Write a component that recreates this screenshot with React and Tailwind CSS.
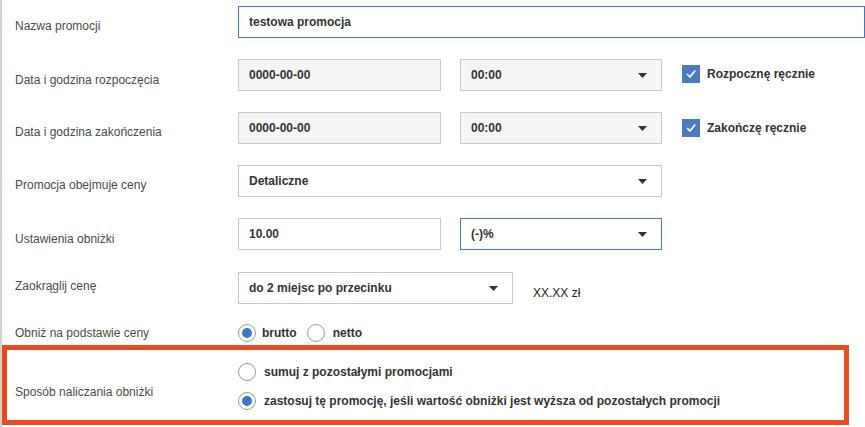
import React from "react";

const Caret = () => (
  <svg width="9" height="5" viewBox="0 0 9 5" className="shrink-0">
    <path d="M0 0 L9 0 L4.5 5 Z" fill="#333" />
  </svg>
);

const Check = () => (
  <div className="w-[18px] h-[18px] bg-[#4a7cbf] flex items-center justify-center shrink-0">
    <svg width="12" height="10" viewBox="0 0 12 10">
      <path d="M2.5 5.5 L5 8 L9.8 2" stroke="#fff" strokeWidth="1.7" fill="none" strokeLinecap="round" strokeLinejoin="round" />
    </svg>
  </div>
);

const Radio = ({ checked }) => (
  <div className="w-[18px] h-[18px] rounded-full border-[1.5px] border-[#9a9a9a] bg-white flex items-center justify-center shrink-0">
    {checked && <div className="w-[10px] h-[10px] rounded-full bg-[#3f78c2]" />}
  </div>
);

const Label = ({ children, pt }) => (
  <div className={`w-[236px] shrink-0 pl-[13px] text-[12px] leading-[16px] text-[#4a4a4a] ${pt}`}>{children}</div>
);

const Box = ({ children, className }) => (
  <div className={`h-[32px] flex items-center justify-between px-[10px] text-[12px] font-bold text-[#333] border ${className}`}>
    {children}
  </div>
);

export default function App() {
  return (
    <div
      className="w-[865px] h-[427px] overflow-hidden bg-white border-l-2 border-[#d2d2d2] flex flex-col pt-[6px]"
      style={{ fontFamily: '"Liberation Sans", Arial, sans-serif' }}
    >
      <div className="flex h-[32px]">
        <Label pt="pt-[12px]">Nazwa promocji</Label>
        <Box className="w-[660px] border-[#3d7bc6] bg-white">testowa promocja</Box>
      </div>

      <div className="flex h-[32px] mt-[21px]">
        <Label pt="pt-[13px]">Data i godzina rozpoczęcia</Label>
        <Box className="w-[203px] border-[#c8c8c8] bg-[#f5f5f5]">0000-00-00</Box>
        <Box className="w-[202px] ml-[19px] border-[#c8c8c8] bg-[#f5f5f5] pr-[14px]">
          <span>00:00</span>
          <Caret />
        </Box>
        <div className="flex items-center ml-[20px] gap-[7px] text-[12px] font-bold text-[#333] -mt-[2px]">
          <Check />
          <span>Rozpocznę ręcznie</span>
        </div>
      </div>

      <div className="flex h-[32px] mt-[21px]">
        <Label pt="pt-[12px]">Data i godzina zakończenia</Label>
        <Box className="w-[203px] border-[#c8c8c8] bg-[#f5f5f5]">0000-00-00</Box>
        <Box className="w-[202px] ml-[19px] border-[#c8c8c8] bg-[#f5f5f5] pr-[14px]">
          <span>00:00</span>
          <Caret />
        </Box>
        <div className="flex items-center ml-[20px] gap-[7px] text-[12px] font-bold text-[#333] -mt-[1px]">
          <Check />
          <span>Zakończę ręcznie</span>
        </div>
      </div>

      <div className="flex h-[32px] mt-[21px]">
        <Label pt="pt-[12px]">Promocja obejmuje ceny</Label>
        <Box className="w-[424px] border-[#c8c8c8] bg-white pr-[14px]">
          <span>Detaliczne</span>
          <Caret />
        </Box>
      </div>

      <div className="flex h-[32px] mt-[21px]">
        <Label pt="pt-[13px]">Ustawienia obniżki</Label>
        <Box className="w-[203px] border-[#c8c8c8] bg-white">10.00</Box>
        <Box className="w-[202px] ml-[19px] border-[#3d7bc6] bg-white pr-[14px]">
          <span>(-)%</span>
          <Caret />
        </Box>
      </div>

      <div className="flex h-[32px] mt-[22px]">
        <Label pt="pt-[6px]">Zaokrąglij cenę</Label>
        <Box className="w-[275px] border-[#c8c8c8] bg-white pr-[14px]">
          <span>do 2 miejsc po przecinku</span>
          <Caret />
        </Box>
        <div className="ml-[20px] pt-[13px] text-[12px] leading-[16px] text-[#222]">XX.XX zł</div>
      </div>

      <div className="flex h-[18px] mt-[20px] items-center">
        <Label pt="pt-0">Obniż na podstawie ceny</Label>
        <Radio checked />
        <span className="ml-[6px] text-[12px] font-bold text-[#333]">brutto</span>
        <div className="ml-[10px]">
          <Radio />
        </div>
        <span className="ml-[8px] text-[12px] font-bold text-[#333]">netto</span>
      </div>

      <div className="mt-[3px] w-[847px] h-[80px] border-[5px] border-[#e94a20] flex">
        <div className="w-[231px] shrink-0 pl-[8px] pt-[34px] text-[12px] leading-[16px] text-[#4a4a4a]">
          Sposób naliczania obniżki
        </div>
        <div className="flex flex-col pt-[13px] gap-[11px]">
          <div className="flex items-center h-[18px]">
            <Radio />
            <span className="ml-[8px] text-[12px] font-bold text-[#333]">sumuj z pozostałymi promocjami</span>
          </div>
          <div className="flex items-center h-[18px]">
            <Radio checked />
            <span className="ml-[8px] text-[12px] font-bold text-[#333]">
              zastosuj tę promocję, jeśli wartość obniżki jest wyższa od pozostałych promocji
            </span>
          </div>
        </div>
      </div>
    </div>
  );
}
